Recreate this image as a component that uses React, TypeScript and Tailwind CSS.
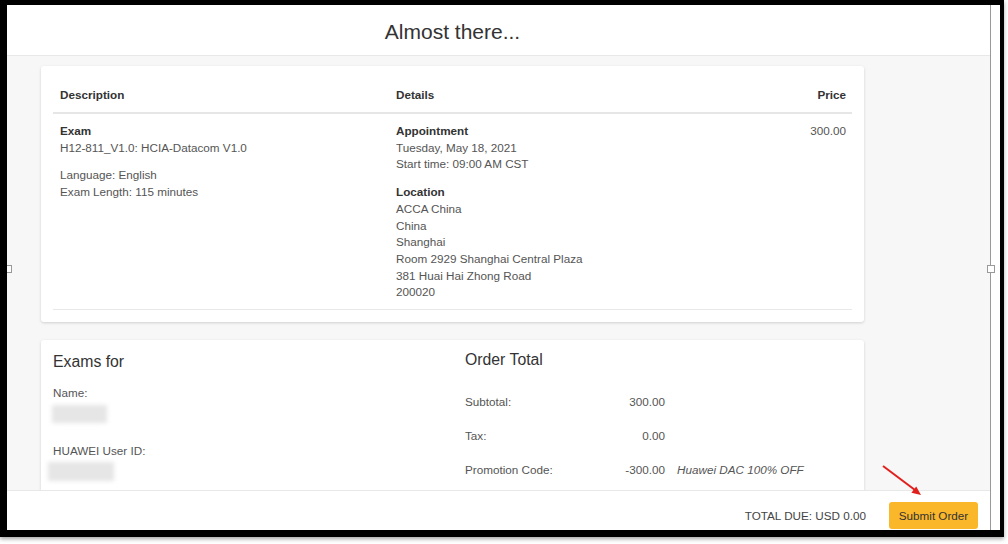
import React from "react";

const font = { fontFamily: "'Liberation Sans', Arial, sans-serif" };

export default function App() {
  return (
    <div className="relative w-[1008px] h-[544px] bg-white overflow-hidden" style={font}>
      {/* frame */}
      <div className="absolute left-0 top-0 w-[1004px] h-[537px] border-l-[7px] border-t-[5px] border-r-[4px] border-b-[7px] border-black shadow-[0_2px_4px_rgba(0,0,0,0.35)] flex bg-white">
        {/* content */}
        <div className="w-[983px] h-full flex flex-col overflow-hidden">
          {/* header */}
          <div className="h-[51px] shrink-0 bg-white border-b border-[#e8e8e8]">
            <div className="ml-[34px] w-[823px] h-full flex items-center justify-center pt-[4px] text-[21px] text-[#333]">
              Almost there...
            </div>
          </div>
          {/* body */}
          <div className="h-[434px] shrink-0 bg-[#f7f7f7] overflow-hidden pl-[34px] pt-[10px]">
            {/* card 1 */}
            <div className="w-[823px] bg-white rounded-[3px] shadow-[0_1px_3px_rgba(0,0,0,0.16)] px-[12px] pt-[13px] pb-[12px] text-[11.7px] leading-[16.7px] text-[#555]">
              <div className="grid grid-cols-[336px_1fr_auto] h-[35px] items-center border-b-2 border-[#e6e6e6] font-bold text-[#333]">
                <div className="pl-[7px]">Description</div>
                <div className="pl-[7px]">Details</div>
                <div className="pr-[6px] text-right">Price</div>
              </div>
              <div className="grid grid-cols-[336px_1fr_auto] pt-[9px] pb-[8px] border-b border-[#e8e8e8]">
                <div className="pl-[7px]">
                  <div className="font-bold text-[#333]">Exam</div>
                  <div>H12-811_V1.0: HCIA-Datacom V1.0</div>
                  <div className="mt-[11px]">Language: English</div>
                  <div>Exam Length: 115 minutes</div>
                </div>
                <div className="pl-[7px]">
                  <div className="font-bold text-[#333]">Appointment</div>
                  <div>Tuesday, May 18, 2021</div>
                  <div>Start time: 09:00 AM CST</div>
                  <div className="mt-[11px] font-bold text-[#333]">Location</div>
                  <div>ACCA China</div>
                  <div>China</div>
                  <div>Shanghai</div>
                  <div>Room 2929 Shanghai Central Plaza</div>
                  <div>381 Huai Hai Zhong Road</div>
                  <div>200020</div>
                </div>
                <div className="pr-[6px] text-right">300.00</div>
              </div>
            </div>
            {/* card 2 */}
            <div className="mt-[18px] w-[823px] h-[200px] bg-white rounded-[3px] shadow-[0_1px_3px_rgba(0,0,0,0.16)] p-[12px] flex text-[11.7px] leading-[16.7px] text-[#555]">
              <div className="w-[412px] shrink-0">
                <div className="text-[15.8px] leading-[20px] text-[#333]">Exams for</div>
                <div className="mt-[13px]">Name:</div>
                <div className="mt-[3px] w-[55px] h-[18px] -ml-[1px] bg-[#e6e6e6] blur-[2px]"></div>
                <div className="mt-[20px]">HUAWEI User ID:</div>
                <div className="mt-[3px] w-[66px] h-[19px] -ml-[5px] bg-[#e6e6e6] blur-[2px]"></div>
              </div>
              <div className="flex-1">
                <div className="text-[15.8px] leading-[20px] text-[#333] -mt-[2px]">Order Total</div>
                <div className="mt-[15px]">
                  <div className="flex h-[34px] items-center">
                    <div className="w-[130px]">Subtotal:</div>
                    <div className="w-[70px] text-right">300.00</div>
                  </div>
                  <div className="flex h-[34px] items-center">
                    <div className="w-[130px]">Tax:</div>
                    <div className="w-[70px] text-right">0.00</div>
                  </div>
                  <div className="flex h-[34px] items-center">
                    <div className="w-[130px]">Promotion Code:</div>
                    <div className="w-[70px] text-right">-300.00</div>
                    <div className="ml-[12px] italic">Huawei DAC 100% OFF</div>
                  </div>
                </div>
              </div>
            </div>
          </div>
          {/* footer */}
          <div className="shrink-0 h-[60px] bg-white border-t border-[#e8e8e8] flex items-start justify-end pt-[11px] pr-[12px] text-[11.7px]">
            <div className="h-[27px] flex items-center text-[#444] mr-[23px]">TOTAL DUE: USD 0.00</div>
            <button className="h-[27px] w-[89px] rounded-[3px] bg-[#fab72a] text-[#333] flex items-center justify-center">
              Submit Order
            </button>
          </div>
        </div>
        {/* right edge line */}
        <div className="w-px h-full bg-[#9a9a9a]"></div>
        <div className="flex-1 bg-white"></div>
      </div>

      {/* handles */}
      <div className="absolute left-[7px] top-[265px] w-[5px] h-[8px] border border-l-0 border-[#999] bg-white"></div>
      <div className="absolute left-[987px] top-[265px] w-[8px] h-[8px] border border-[#999] bg-white"></div>

      {/* red arrow */}
      <svg className="absolute left-[878px] top-[460px]" width="50" height="42" viewBox="0 0 50 42">
        <line x1="5" y1="6" x2="37" y2="30" stroke="#e0201c" strokeWidth="2" />
        <polygon points="43,35 33.4,32.8 38.2,26.4" fill="#e0201c" />
      </svg>
    </div>
  );
}
